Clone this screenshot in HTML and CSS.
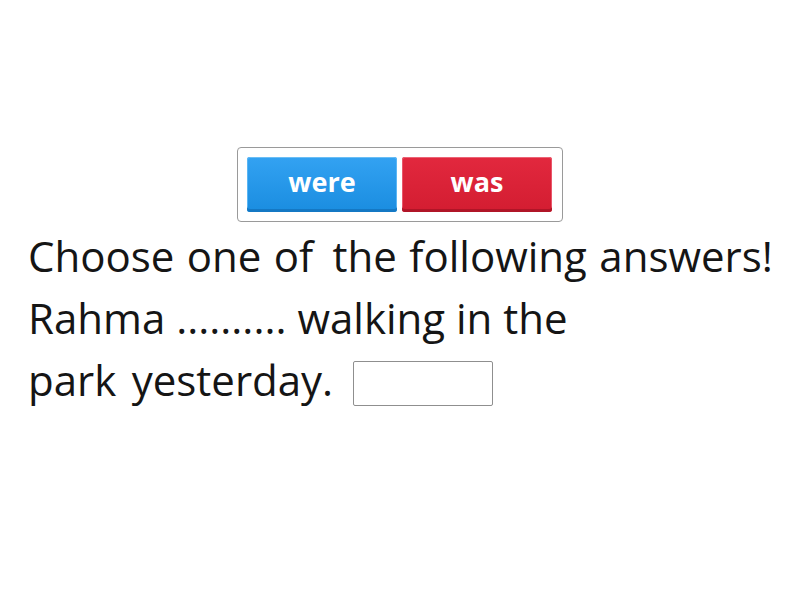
FILE: index.html
```html
<!DOCTYPE html>
<html>
<head>
<meta charset="utf-8">
<link rel="stylesheet" href="styles.css">
</head>
<body>
<div class="page">
  <div class="choices">
    <div class="btn blue">were</div>
    <div class="btn red">was</div>
  </div>
  <div class="question">
    <div class="line">Choose one of <span class="w">the</span> following answers!</div>
    <div class="line tight">Rahma .......... walking in the</div>
    <div class="line">park <span class="w small">yesterday.</span> <span class="slot"></span></div>
  </div>
</div>
</body>
</html>
```

FILE: styles.css
```css
html, body {
  margin: 0;
  padding: 0;
  background: #fff;
}
.page {
  width: 800px;
  height: 600px;
  font-family: "Open Sans", sans-serif;
  padding-top: 147px;
  box-sizing: border-box;
}
.choices {
  width: 326px;
  box-sizing: border-box;
  margin: 0 auto;
  border: 1px solid #9a9a9a;
  border-radius: 4px;
  padding: 9px;
  display: flex;
  gap: 5px;
}
.btn {
  width: 150px;
  height: 55px;
  border-radius: 3px;
  color: #fff;
  font-weight: 700;
  font-size: 27px;
  display: flex;
  align-items: center;
  justify-content: center;
  box-sizing: border-box;
  padding-bottom: 6px;
}
.blue {
  background: linear-gradient(#33a2f2, #1a8de0);
  box-shadow: inset 0 -3px 0 #1478c4, inset 1px 0 0 #5ab6f4, inset -1px 0 0 #5ab6f4, inset 0 1px 0 #6bbef5;
}
.red {
  background: linear-gradient(#e2283e, #d31d31);
  box-shadow: inset 0 -3px 0 #b01527, inset 1px 0 0 #e9566a, inset -1px 0 0 #e9566a, inset 0 1px 0 #ec6476;
}
.question {
  margin-top: 3px;
  padding-left: 28px;
  font-size: 42px;
  line-height: 62px;
  word-spacing: 1.5px;
  color: #151515;
}
.line {
  white-space: nowrap;
}
.tight {
  word-spacing: 0;
}
.w {
  margin-left: 7px;
}
.w.small {
  margin-left: 3px;
}
.slot {
  display: inline-block;
  width: 140px;
  height: 45px;
  box-sizing: border-box;
  border: 1px solid #8f8f8f;
  border-radius: 2px;
  vertical-align: middle;
  margin-left: 7px;
  position: relative;
  top: -1px;
}
```
